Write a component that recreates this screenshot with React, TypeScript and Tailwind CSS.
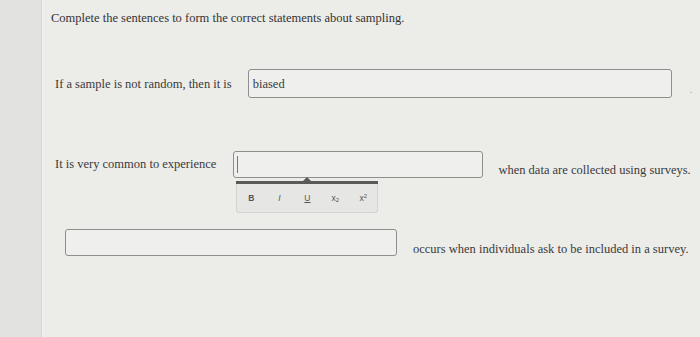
export default function App() {
  return (
    <div className="flex h-[337px] w-[700px] overflow-hidden bg-[#e9e9e7] font-['Liberation_Serif',serif] text-[12.5px] text-[#3a3a3a]">
      {/* left strip */}
      <div className="w-[42px] shrink-0 border-r border-[#d6d6d4] bg-[#e2e2e0]" />
      <div className="flex w-px shrink-0 bg-[#f2f2f0]" />

      {/* main */}
      <div className="flex flex-1 flex-col bg-[#ecece9]">
        <p className="ml-[8px] mt-[10px] text-[12.5px] leading-[16px] text-[#333]">
          Complete the sentences to form the correct statements about sampling.
        </p>

        {/* row 1 */}
        <div className="ml-[12px] mt-[43px] flex items-center">
          <span className="leading-[16px]">If a sample is not random, then it is</span>
          <div className="ml-[16px] flex h-[29px] w-[424px] items-center rounded-[3px] border border-[#8e8e8c] bg-[#efefed] px-[4px] leading-[16px]">
            biased
          </div>
          <span className="ml-[18px] mt-[12px] text-[10px] text-[#9a9a98]">.</span>
        </div>

        {/* row 2 */}
        <div className="ml-[12px] mt-[53px] flex items-start">
          <span className="mt-[5px] leading-[16px]">It is very common to experience</span>
          <div className="ml-[17px] flex flex-col">
            <div className="flex h-[27px] w-[250px] items-center rounded-[3px] border border-[#8e8e8c] bg-[#efefed] px-[3px]">
              <div className="h-[17px] w-px bg-[#777]" />
            </div>
            <div className="relative ml-[3px] mt-[3px] w-[142px]">
              <div className="h-[3px] bg-[#5a5a5a]" />
              <div className="absolute left-[67px] top-[-4px] h-0 w-0 border-x-[4px] border-b-[4px] border-x-transparent border-b-[#5a5a5a]" />
              <div className="flex h-[29px] items-center rounded-b-[3px] border border-t-0 border-[#d4d4d2] bg-[#e6e6e4] font-['Liberation_Sans',sans-serif] text-[8.5px] text-[#555]">
                <span className="w-[28px] text-center font-bold">B</span>
                <span className="w-[28px] text-center italic">I</span>
                <span className="w-[28px] text-center underline">U</span>
                <span className="w-[28px] text-center">
                  x<sub className="text-[6px]">2</sub>
                </span>
                <span className="w-[28px] text-center">
                  x<sup className="text-[6px]">2</sup>
                </span>
              </div>
            </div>
          </div>
          <span className="ml-[15px] mt-[11px] leading-[16px]">when data are collected using surveys.</span>
        </div>

        {/* row 3 */}
        <div className="ml-[22px] mt-[16px] flex items-start">
          <div className="h-[27px] w-[332px] rounded-[3px] border border-[#8e8e8c] bg-[#efefed]" />
          <span className="ml-[16px] mt-[12px] leading-[16px]">occurs when individuals ask to be included in a survey.</span>
        </div>
      </div>
    </div>
  );
}
